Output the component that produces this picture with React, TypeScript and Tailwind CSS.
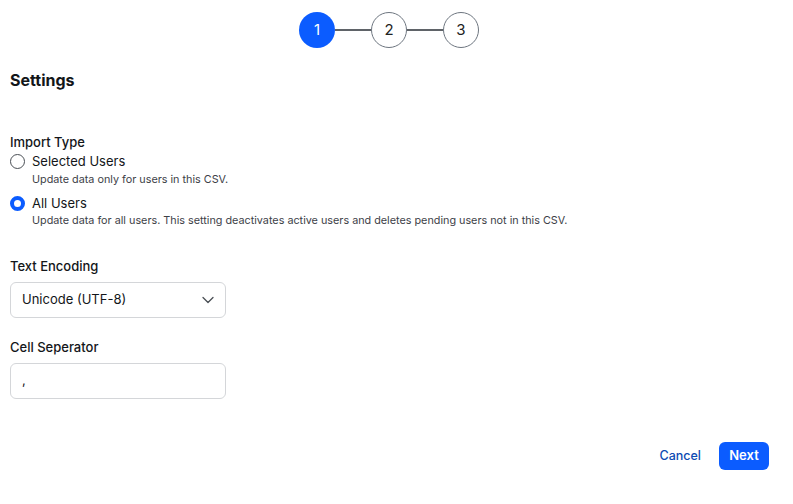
import React from "react";

function Step({ n, active }: { n: number; active?: boolean }) {
  return (
    <div
      className={
        active
          ? "w-9 h-9 rounded-full bg-[#0b5cff] text-white flex items-center justify-center text-[15px]"
          : "w-9 h-9 rounded-full border border-[#6e7680] bg-white text-[#222] flex items-center justify-center text-[15px]"
      }
    >
      {n}
    </div>
  );
}

export default function App() {
  return (
    <div className="w-[793px] h-[504px] bg-white text-[#131619] relative" style={{ fontFamily: "Inter, 'Noto Sans', sans-serif" }}>
      <div className="flex items-center pt-3 pl-[299px]">
        <Step n={1} active />
        <div className="w-9 h-[2px] bg-[#5f6368]" />
        <Step n={2} />
        <div className="w-9 h-[2px] bg-[#5f6368]" />
        <Step n={3} />
      </div>
      <div className="px-[10px]">
        <h1 className="text-[16px] font-bold mt-[21px] leading-[22px]">Settings</h1>
        <div className="mt-[42px] text-[13px] font-medium leading-[18px]">Import Type</div>
        <div className="mt-[1px] flex items-center gap-[7px]">
          <div className="w-[15px] h-[15px] rounded-full border border-[#4a4f55]" />
          <span className="text-[13px] leading-[18px]">Selected Users</span>
        </div>
        <div className="pl-[22px] text-[10.8px] text-[#3d4147] leading-[16px] mt-[2px]">Update data only for users in this CSV.</div>
        <div className="mt-[6px] flex items-center gap-[7px]">
          <div className="w-[15px] h-[15px] rounded-full border-[4px] border-[#0b5cff] bg-white" />
          <span className="text-[13px] leading-[18px]">All Users</span>
        </div>
        <div className="pl-[22px] text-[10.8px] text-[#3d4147] leading-[16px] mt-[1px]">
          Update data for all users. This setting deactivates active users and deletes pending users not in this CSV.
        </div>
        <div className="mt-[28px] text-[13px] font-medium leading-[18px]">Text Encoding</div>
        <div className="mt-[7px] w-[216px] h-9 border border-[#d4d6d9] rounded-[6px] flex items-center justify-between pl-[11px] pr-[10px]">
          <span className="text-[13px]">Unicode (UTF-8)</span>
          <svg width="14" height="14" viewBox="0 0 14 14" fill="none">
            <path d="M2 4.5 L7 9.5 L12 4.5" stroke="#4a4f55" strokeWidth="1.3" strokeLinecap="round" strokeLinejoin="round" />
          </svg>
        </div>
        <div className="mt-[20px] text-[13px] font-medium leading-[18px]">Cell Seperator</div>
        <div className="mt-[7px] w-[216px] h-9 border border-[#d4d6d9] rounded-[6px] flex items-center pl-[11px]">
          <span className="text-[13px]">,</span>
        </div>
      </div>
      <div className="absolute right-[24px] top-[442px] flex items-center gap-[18px]">
        <span className="text-[12.5px] font-medium text-[#0e4bb3]">Cancel</span>
        <button className="h-7 w-[50px] flex items-center justify-center rounded-[6px] bg-[#0b5cff] text-white text-[13px] font-semibold">Next</button>
      </div>
    </div>
  );
}
